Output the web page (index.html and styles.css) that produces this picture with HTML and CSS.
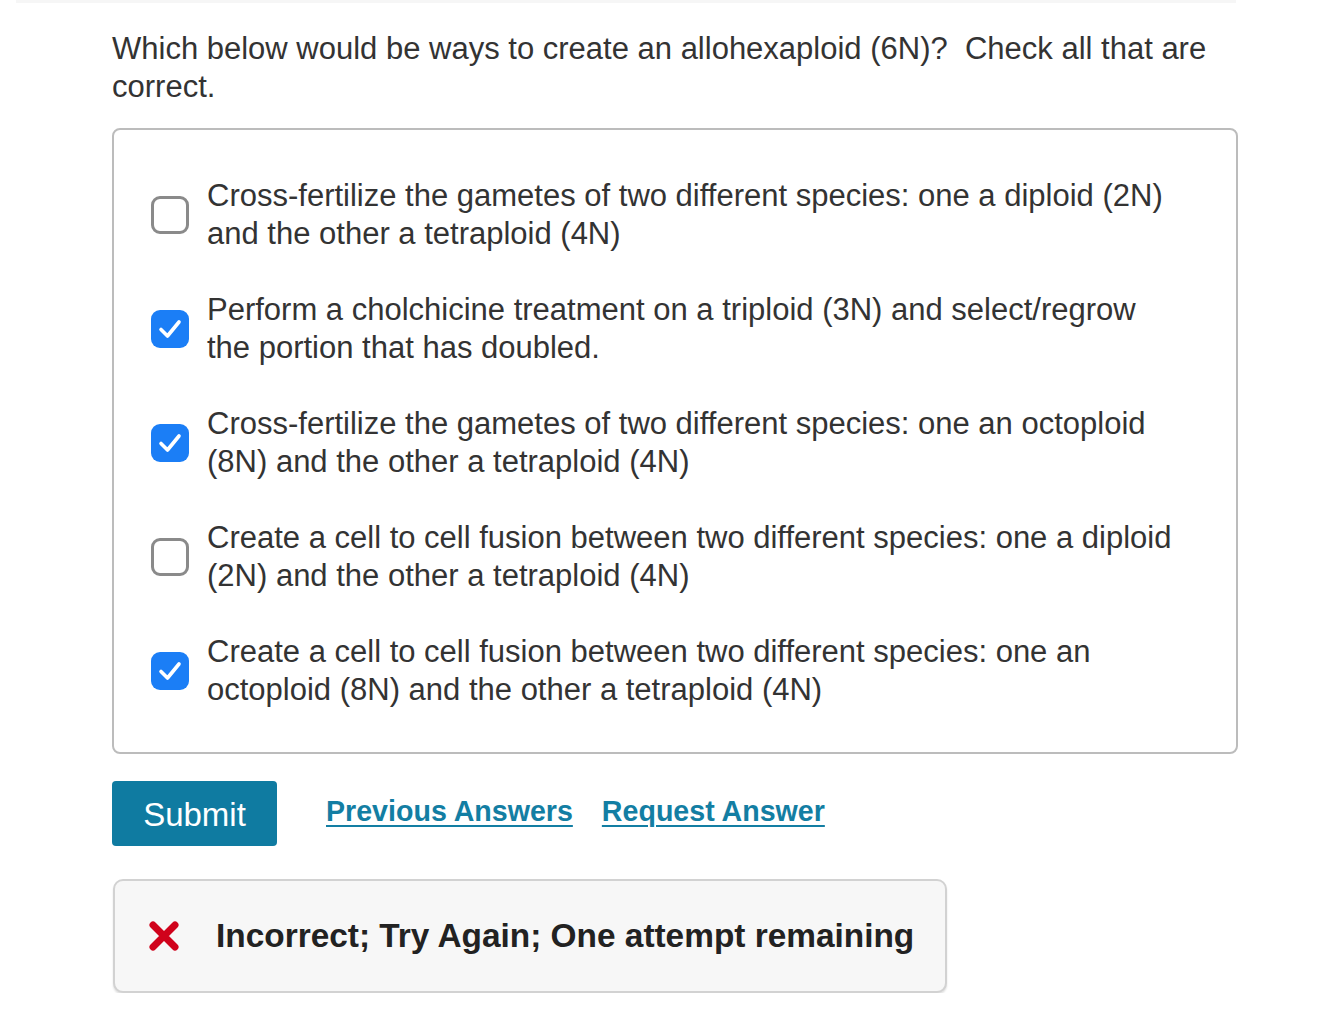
FILE: index.html
```html
<!DOCTYPE html>
<html>
<head>
<meta charset="utf-8">
<link rel="stylesheet" href="styles.css">
</head>
<body>
<div class="top-strip"></div>
<div class="page">
  <p class="question">Which below would be ways to create an allohexaploid (6N)?&nbsp; Check all that are correct.</p>
  <div class="options">
    <label class="option">
      <span class="cb"></span>
      <span class="opt-text">Cross-fertilize the gametes of two different species: one a diploid (2N) and the other a tetraploid (4N)</span>
    </label>
    <label class="option">
      <span class="cb checked"><svg viewBox="0 0 38 38" width="38" height="38"><path d="M10 19.5 L16.5 26 L28 12" fill="none" stroke="#fff" stroke-width="3.6" stroke-linecap="round" stroke-linejoin="round"/></svg></span>
      <span class="opt-text">Perform a cholchicine treatment on a triploid (3N) and select/regrow the portion that has doubled.</span>
    </label>
    <label class="option">
      <span class="cb checked"><svg viewBox="0 0 38 38" width="38" height="38"><path d="M10 19.5 L16.5 26 L28 12" fill="none" stroke="#fff" stroke-width="3.6" stroke-linecap="round" stroke-linejoin="round"/></svg></span>
      <span class="opt-text">Cross-fertilize the gametes of two different species: one an octoploid (8N) and the other a tetraploid (4N)</span>
    </label>
    <label class="option">
      <span class="cb"></span>
      <span class="opt-text">Create a cell to cell fusion between two different species: one a diploid (2N) and the other a tetraploid (4N)</span>
    </label>
    <label class="option">
      <span class="cb checked"><svg viewBox="0 0 38 38" width="38" height="38"><path d="M10 19.5 L16.5 26 L28 12" fill="none" stroke="#fff" stroke-width="3.6" stroke-linecap="round" stroke-linejoin="round"/></svg></span>
      <span class="opt-text">Create a cell to cell fusion between two different species: one an octoploid (8N) and the other a tetraploid (4N)</span>
    </label>
  </div>
  <div class="actions">
    <button class="submit">Submit</button>
    <a class="link" href="#">Previous Answers</a>
    <a class="link" href="#">Request Answer</a>
  </div>
  <div class="feedback">
    <svg class="x-icon" viewBox="0 0 32 32" width="32" height="32"><path d="M5 5 L27 27 M27 5 L5 27" stroke="#d0021b" stroke-width="7" stroke-linecap="round"/></svg>
    <span class="fb-text">Incorrect; Try Again; One attempt remaining</span>
  </div>
</div>
</body>
</html>
```
FILE: styles.css
```css
html, body {
  margin: 0;
  padding: 0;
  background: #fff;
}
body {
  font-family: "Liberation Sans", Arial, sans-serif;
  color: #333;
}
.top-strip {
  margin: 0 95px 0 16px;
  height: 3px;
  background: #f6f6f6;
}
.page {
  margin-left: 112px;
  width: 1126px;
}
.question {
  margin: 27px 0 0 0;
  font-size: 31px;
  line-height: 38px;
  color: #333;
}
.options {
  margin-top: 22px;
  border: 2px solid #bcbcbc;
  border-radius: 8px;
  padding: 47px 58px 43px 37px;
  display: flex;
  flex-direction: column;
  gap: 38px;
}
.option {
  display: flex;
  align-items: center;
  gap: 18px;
}
.cb {
  flex: none;
  width: 38px;
  height: 38px;
  box-sizing: border-box;
  border: 3px solid #8a8a8a;
  border-radius: 9px;
  background: #fff;
  display: flex;
}
.cb.checked {
  border: none;
  background: #1b7ef6;
}
.opt-text {
  font-size: 31px;
  line-height: 38px;
  color: #333;
}
.actions {
  margin-top: 27px;
  display: flex;
  align-items: center;
}
.submit {
  width: 165px;
  height: 65px;
  background: #0f7ba1;
  color: #fff;
  border: none;
  border-radius: 4px;
  font-family: "Liberation Sans", Arial, sans-serif;
  font-size: 33px;
  padding: 2px 0 0 0;
  margin-right: 49px;
}
.link {
  font-size: 28.6px;
  font-weight: bold;
  color: #137ea3;
  text-decoration: underline;
  text-underline-offset: 4px;
  text-decoration-thickness: 2px;
  margin-right: 29px;
  margin-top: -4px;
}
.feedback {
  margin-top: 33px;
  margin-left: 1px;
  width: 834px;
  height: 114px;
  box-sizing: border-box;
  background: #f7f7f7;
  border: 2px solid #d2d2d2;
  border-radius: 10px;
  box-shadow: 0 2px 2px rgba(0,0,0,0.12);
  display: flex;
  align-items: center;
  padding-left: 33px;
}
.x-icon {
  flex: none;
  margin-right: 36px;
}
.fb-text {
  font-size: 33.4px;
  font-weight: bold;
  color: #222;
}
```
